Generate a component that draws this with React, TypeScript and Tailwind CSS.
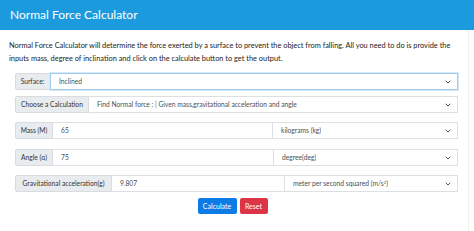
import { ChevronDown } from "lucide-react";

/* ─── select box ─────────────────────────────────────── */
const Select = ({
  value,
  focused = false,
  className = "",
}: {
  value: React.ReactNode;
  focused?: boolean;
  className?: string;
}) => (
  <div
    className={`flex flex-1 items-center justify-between border bg-white pl-[8px] pr-[5px] text-[#495057] ${
      focused ? "border-[#9ecbee] shadow-[0_0_0_1px_#d6e9f8]" : "border-[#dcdfe3]"
    } ${className}`}
  >
    <span className="truncate">{value}</span>
    <ChevronDown className="h-[8px] w-[8px] shrink-0 text-[#555]" strokeWidth={3} />
  </div>
);

/* ─── row ────────────────────────────────────────────── */
const Row = ({
  label,
  labelW,
  children,
  className = "",
}: {
  label: string;
  labelW: string;
  children: React.ReactNode;
  className?: string;
}) => (
  <div className={`flex h-[17px] text-[6.7px] ${className}`}>
    <div
      className={`flex shrink-0 items-center justify-center rounded-l-[2px] border border-[#d8dce0] bg-[#e9ecef] text-[#333] ${labelW}`}
    >
      {label}
    </div>
    {children}
  </div>
);

const Input = ({ value, className = "" }: { value: string; className?: string }) => (
  <div
    className={`flex items-center border border-l-0 border-[#dcdfe3] bg-white pl-[8px] text-[#495057] ${className}`}
  >
    {value}
  </div>
);

export default function App() {
  return (
    <div
      className="h-[231px] w-[474px] overflow-hidden bg-white"
      style={{ fontFamily: "Lato, 'Open Sans', sans-serif" }}
    >
      <div className="flex h-[30px] items-center bg-[#1b9bde] pl-[10px] text-[12px] text-white">
        Normal Force Calculator
      </div>

      <div className="mr-[5px] border-r border-[#f0f0f0] pb-[20px]">
        <p className="px-[9px] pt-[10px] text-[7.4px] leading-[12.5px] text-[#222]">
          Normal Force Calculator will determine the force exerted by a surface to prevent the object from falling. All you need to do is provide the inputs mass, degree of inclination and click on the calculate button to get the output.
        </p>

        <div className="pl-[15px] pr-[10px] pt-[8px]">
          <Row label="Surface:" labelW="w-[35px]">
            <Select value="Inclined" focused />
          </Row>

          <Row label="Choose a Calculation" labelW="w-[74px]" className="mt-[6px]">
            <Select value="Find Normal force : | Given mass,gravitational acceleration and angle" className="border-l-0" />
          </Row>

          <Row label="Mass (M)" labelW="w-[38px]" className="mt-[9px]">
            <Input value="65" className="w-[220px]" />
            <Select value="kilograms (kg)" className="border-l-0" />
          </Row>

          <Row label="Angle (α)" labelW="w-[38px]" className="mt-[10px]">
            <Input value="75" className="w-[221px]" />
            <Select value="degree(deg)" className="border-l-0" />
          </Row>

          <Row label="Gravitational acceleration(g)" labelW="w-[97px]" className="mt-[9px]">
            <Input value="9.807" className="w-[173px]" />
            <Select
              value={
                <>
                  meter per second squared (m/s<sup className="text-[4.5px]">2</sup>)
                </>
              }
              className="border-l-0"
            />
          </Row>

          <div className="mt-[6px] flex justify-center gap-[3px] pr-[8px] text-[7px] text-white">
            <button className="h-[16px] w-[39px] rounded-[2px] bg-[#0d7be6]">Calculate</button>
            <button className="h-[16px] w-[28px] rounded-[2px] bg-[#dc3545]">Reset</button>
          </div>
        </div>
      </div>
    </div>
  );
}
